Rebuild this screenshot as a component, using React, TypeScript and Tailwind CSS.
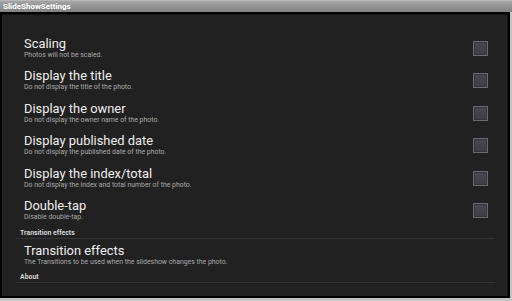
import React from "react";

const prefs = [
  { title: "Scaling", summary: "Photos will not be scaled." },
  { title: "Display the title", summary: "Do not display the title of the photo." },
  { title: "Display the owner", summary: "Do not display the owner name of the photo." },
  { title: "Display published date", summary: "Do not display the published date of the photo." },
  { title: "Display the index/total", summary: "Do not display the index and total number of the photo." },
  { title: "Double-tap", summary: "Disable double-tap." },
];

const CheckBox = () => (
  <div className="w-[15px] h-[15px] border border-[#6b6b6d] bg-gradient-to-b from-[#47494e] to-[#3c3e43] shadow-[inset_0_0_0_1px_#35363a]" />
);

const PrefRow = ({ title, summary, checkbox }: { title: string; summary: string; checkbox?: boolean }) => (
  <div className="h-[32.5px] flex items-center pl-[22px] pr-[19px]">
    <div className="flex-1 flex flex-col">
      <div className="text-[12.9px] leading-[14px] text-[#efefef]">{title}</div>
      <div className="text-[6.9px] leading-[9px] text-[#a9a9a9]">{summary}</div>
    </div>
    {checkbox && <CheckBox />}
  </div>
);

const Category = ({ label }: { label: string }) => (
  <div className="pl-[14px] pr-[12px]">
    <div className="pl-[4px] text-[6.9px] font-bold leading-[10px] text-[#d4d4d4]">{label}</div>
    <div className="h-px bg-[#333333]" />
  </div>
);

export default function App() {
  return (
    <div
      className="w-[512px] h-[301px] flex flex-col bg-[#c4c4c4] overflow-hidden"
      style={{ fontFamily: "Roboto, 'Noto Sans', sans-serif" }}
    >
      <div className="h-[12px] flex items-center px-[3px] bg-gradient-to-b from-[#a4a4a4] to-[#828282] border-t border-[#b8b8b8]">
        <span className="text-[8px] font-bold leading-none text-white">SlideShowSettings</span>
      </div>
      <div className="flex-1 mr-[2px] mb-[3px] border-2 border-black bg-[#212121]">
        <div className="h-full border-t border-r border-[#141414] flex flex-col">
          <div className="h-[17px]" />
          {prefs.map((p) => (
            <PrefRow key={p.title} title={p.title} summary={p.summary} checkbox />
          ))}
          <div className="h-[1px]" />
          <Category label="Transition effects" />
          <div className="h-[33px] flex items-center pl-[22px] pr-[19px]">
            <div className="flex flex-col">
              <div className="text-[12.9px] leading-[14px] text-[#efefef]">Transition effects</div>
              <div className="text-[6.9px] leading-[9px] text-[#a9a9a9]">
                The Transitions to be used when the slideshow changes the photo.
              </div>
            </div>
          </div>
          <Category label="About" />
        </div>
      </div>
    </div>
  );
}
